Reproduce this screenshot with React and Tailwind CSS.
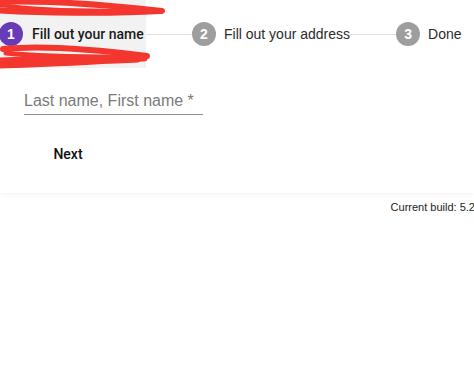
import React from "react";

const StepIcon = ({ n, active }) => (
  <span
    className={`flex items-center justify-center w-6 h-6 rounded-full text-white text-[14px] font-bold shrink-0 ${
      active ? "bg-[#673ab7]" : "bg-[#9e9e9e]"
    }`}
  >
    {n}
  </span>
);

const Scribbles = () => (
  <svg
    className="absolute inset-0 pointer-events-none"
    width="474"
    height="366"
    viewBox="0 0 474 366"
    fill="none"
    stroke="#f3362e"
    strokeLinecap="round"
  >
    {/* top mark */}
    <path d="M-6 2 C 40 0, 100 4, 162 11" strokeWidth="6" />
    <path d="M-6 10 C 40 13, 110 14, 160 11" strokeWidth="6" />
    <path d="M0 5 C 50 12, 120 11, 158 10" strokeWidth="4" />
    {/* bottom mark */}
    <path d="M3 49 C 40 45, 100 50, 147 56" strokeWidth="6" />
    <path d="M6 53 C 50 58, 110 57, 146 57" strokeWidth="5" />
    <path d="M-4 61 C 40 60, 100 58, 144 58" strokeWidth="7" />
    <path d="M-2 66 C 40 65, 90 62, 138 60" strokeWidth="5" />
  </svg>
);

export default function App() {
  return (
    <div className="relative w-[474px] h-[366px] overflow-hidden bg-white font-['Liberation_Sans',Arial,sans-serif]">
      {/* CARD */}
      <div className="h-[193px] bg-white shadow-[0_3px_4px_rgba(0,0,0,0.03)]">
        {/* STEPPER HEADER */}
        <div className="flex items-center h-[68px]">
          <div className="flex items-center gap-[9px] h-full w-[147px] bg-[#f2f2f2] -ml-px">
            <StepIcon n="1" active />
            <span className="font-['Roboto',Arial,sans-serif] text-[14px] font-medium text-[#1a1a1a] whitespace-nowrap">
              Fill out your name
            </span>
          </div>
          <div className="w-[46px] h-px bg-[#e0e0e0]"></div>
          <div className="flex items-center gap-2">
            <StepIcon n="2" />
            <span className="text-[14px] text-[#2b2b2b] whitespace-nowrap">
              Fill out your address
            </span>
          </div>
          <div className="w-[46px] h-px bg-[#e0e0e0]"></div>
          <div className="flex items-center gap-2">
            <StepIcon n="3" />
            <span className="text-[14px] text-[#2b2b2b]">Done</span>
          </div>
        </div>

        {/* FORM */}
        <div className="pl-6 pt-[23px]">
          <div className="w-[179px] pb-[3px] border-b border-[#8f8f8f]">
            <span className="block text-[16px] leading-[20px] text-[#7a7a7a] whitespace-nowrap">
              Last name, First name *
            </span>
          </div>
          <button className="mt-[21px] ml-3 h-9 min-w-16 px-4 font-['Roboto',Arial,sans-serif] text-[14px] font-medium text-[#111]">
            Next
          </button>
        </div>
      </div>

      {/* FOOTER */}
      <div className="flex justify-end mt-[8px] -mr-px">
        <span className="text-[11px] leading-[13px] text-[#222] whitespace-nowrap">
          Current build: 5.2
        </span>
      </div>

      <Scribbles />
    </div>
  );
}
